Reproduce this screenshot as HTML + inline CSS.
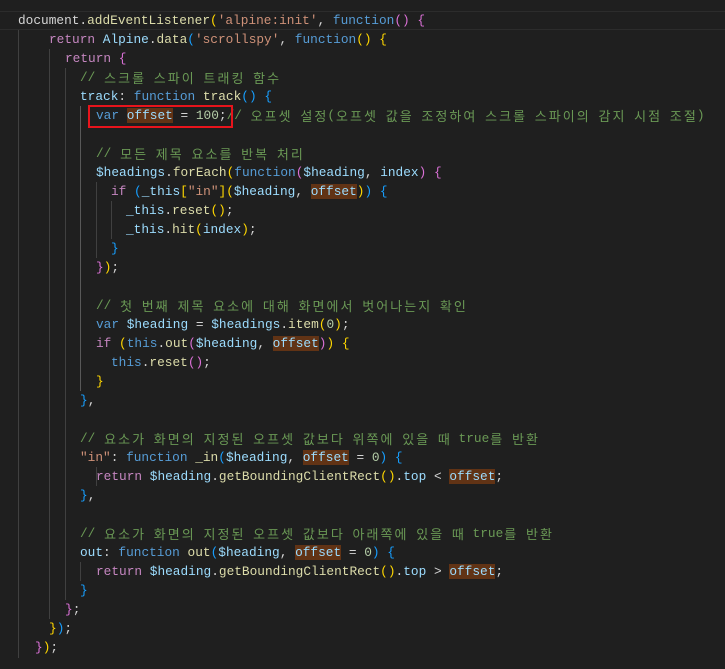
<!DOCTYPE html>
<html><head><meta charset="utf-8"><style>
html,body{margin:0;padding:0;background:#1f1f1f;width:725px;height:669px;overflow:hidden}
.l{position:absolute;white-space:pre;font-family:"Liberation Mono",monospace;font-size:12.8px;line-height:19px;color:#d4d4d4;height:19px}
i{font-style:normal;display:inline-block;width:14px;text-align:center;font-family:"Noto Sans CJK KR",sans-serif;font-size:13px;line-height:19px;vertical-align:top}
.c{color:#6a9955}.b{color:#569cd6}.p{color:#c586c0}.f{color:#dcdcaa}.v{color:#9cdcfe}.s{color:#ce9178}
.y{color:#ffd700}.o{color:#da70d6}.u{color:#179fff}.n{color:#b5cea8}
.h{background:#613315}
.g{position:absolute;width:1px;background:#404040}
</style></head><body>
<div style="position:absolute;left:0;top:11px;width:725px;height:17px;border-top:1px solid #2c2c2c;border-bottom:1px solid #2c2c2c"></div>
<div class="g" style="left:18px;top:30px;height:628px"></div>
<div class="g" style="left:49px;top:49px;height:570px"></div>
<div class="g" style="left:65px;top:68px;height:532px"></div>
<div class="g" style="left:80px;top:106px;height:285px;background:#585858"></div>
<div class="g" style="left:96px;top:182px;height:76px"></div>
<div class="g" style="left:111px;top:201px;height:38px"></div>
<div class="g" style="left:96px;top:467px;height:19px"></div>
<div class="g" style="left:80px;top:562px;height:19px"></div>

<div class="l" style="left:18px;top:11px">document.<span class="f">addEventListener</span><span class="y">(</span><span class="s">'alpine:init'</span>, <span class="b">function</span><span class="o">()</span> <span class="o">{</span></div>
<div class="l" style="left:49px;top:30px"><span class="p">return</span> <span class="v">Alpine</span>.<span class="f">data</span><span class="u">(</span><span class="s">'scrollspy'</span>, <span class="b">function</span><span class="y">()</span> <span class="y">{</span></div>
<div class="l" style="left:65px;top:49px"><span class="p">return</span> <span class="o">{</span></div>
<div class="l c" style="left:80px;top:68px">// <i>스</i><i>크</i><i>롤</i> <i>스</i><i>파</i><i>이</i> <i>트</i><i>래</i><i>킹</i> <i>함</i><i>수</i></div>
<div class="l" style="left:80px;top:87px"><span class="v">track</span>: <span class="b">function</span> <span class="f">track</span><span class="u">()</span> <span class="u">{</span></div>
<div class="l" style="left:96px;top:106px"><span class="b">var</span> <span class="v h">offset</span> = <span class="n">100</span>;<span class="c">// <i>오</i><i>프</i><i>셋</i> <i>설</i><i>정</i>(<i>오</i><i>프</i><i>셋</i> <i>값</i><i>을</i> <i>조</i><i>정</i><i>하</i><i>여</i> <i>스</i><i>크</i><i>롤</i> <i>스</i><i>파</i><i>이</i><i>의</i> <i>감</i><i>지</i> <i>시</i><i>점</i> <i>조</i><i>절</i>)</span></div>
<div style="position:absolute;left:88px;top:105px;width:141px;height:19px;border:2px solid #e8141c"></div>
<div class="l c" style="left:96px;top:144px">// <i>모</i><i>든</i> <i>제</i><i>목</i> <i>요</i><i>소</i><i>를</i> <i>반</i><i>복</i> <i>처</i><i>리</i></div>
<div class="l" style="left:96px;top:163px"><span class="v">$headings</span>.<span class="f">forEach</span><span class="y">(</span><span class="b">function</span><span class="o">(</span><span class="v">$heading</span>, <span class="v">index</span><span class="o">)</span> <span class="o">{</span></div>
<div class="l" style="left:111px;top:182px"><span class="p">if</span> <span class="u">(</span><span class="v">_this</span><span class="y">[</span><span class="s">"in"</span><span class="y">](</span><span class="v">$heading</span>, <span class="v h">offset</span><span class="y">)</span><span class="u">)</span> <span class="u">{</span></div>
<div class="l" style="left:126px;top:201px"><span class="v">_this</span>.<span class="f">reset</span><span class="y">()</span>;</div>
<div class="l" style="left:126px;top:220px"><span class="v">_this</span>.<span class="f">hit</span><span class="y">(</span><span class="v">index</span><span class="y">)</span>;</div>
<div class="l" style="left:111px;top:239px"><span class="u">}</span></div>
<div class="l" style="left:96px;top:258px"><span class="o">}</span><span class="y">)</span>;</div>
<div class="l c" style="left:96px;top:296px">// <i>첫</i> <i>번</i><i>째</i> <i>제</i><i>목</i> <i>요</i><i>소</i><i>에</i> <i>대</i><i>해</i> <i>화</i><i>면</i><i>에</i><i>서</i> <i>벗</i><i>어</i><i>나</i><i>는</i><i>지</i> <i>확</i><i>인</i></div>
<div class="l" style="left:96px;top:315px"><span class="b">var</span> <span class="v">$heading</span> = <span class="v">$headings</span>.<span class="f">item</span><span class="y">(</span><span class="n">0</span><span class="y">)</span>;</div>
<div class="l" style="left:96px;top:334px"><span class="p">if</span> <span class="y">(</span><span class="b">this</span>.<span class="f">out</span><span class="o">(</span><span class="v">$heading</span>, <span class="v h">offset</span><span class="o">)</span><span class="y">)</span> <span class="y">{</span></div>
<div class="l" style="left:111px;top:353px"><span class="b">this</span>.<span class="f">reset</span><span class="o">()</span>;</div>
<div class="l" style="left:96px;top:372px"><span class="y">}</span></div>
<div class="l" style="left:80px;top:391px"><span class="u">}</span>,</div>
<div class="l c" style="left:80px;top:429px">// <i>요</i><i>소</i><i>가</i> <i>화</i><i>면</i><i>의</i> <i>지</i><i>정</i><i>된</i> <i>오</i><i>프</i><i>셋</i> <i>값</i><i>보</i><i>다</i> <i>위</i><i>쪽</i><i>에</i> <i>있</i><i>을</i> <i>때</i> true<i>를</i> <i>반</i><i>환</i></div>
<div class="l" style="left:80px;top:448px"><span class="s">"in"</span>: <span class="b">function</span> <span class="f">_in</span><span class="u">(</span><span class="v">$heading</span>, <span class="v h">offset</span> = <span class="n">0</span><span class="u">)</span> <span class="u">{</span></div>
<div class="l" style="left:96px;top:467px"><span class="p">return</span> <span class="v">$heading</span>.<span class="f">getBoundingClientRect</span><span class="y">()</span>.<span class="v">top</span> &lt; <span class="v h">offset</span>;</div>
<div class="l" style="left:80px;top:486px"><span class="u">}</span>,</div>
<div class="l c" style="left:80px;top:524px">// <i>요</i><i>소</i><i>가</i> <i>화</i><i>면</i><i>의</i> <i>지</i><i>정</i><i>된</i> <i>오</i><i>프</i><i>셋</i> <i>값</i><i>보</i><i>다</i> <i>아</i><i>래</i><i>쪽</i><i>에</i> <i>있</i><i>을</i> <i>때</i> true<i>를</i> <i>반</i><i>환</i></div>
<div class="l" style="left:80px;top:543px"><span class="v">out</span>: <span class="b">function</span> <span class="f">out</span><span class="u">(</span><span class="v">$heading</span>, <span class="v h">offset</span> = <span class="n">0</span><span class="u">)</span> <span class="u">{</span></div>
<div class="l" style="left:96px;top:562px"><span class="p">return</span> <span class="v">$heading</span>.<span class="f">getBoundingClientRect</span><span class="y">()</span>.<span class="v">top</span> &gt; <span class="v h">offset</span>;</div>
<div class="l" style="left:80px;top:581px"><span class="u">}</span></div>
<div class="l" style="left:65px;top:600px"><span class="o">}</span>;</div>
<div class="l" style="left:49px;top:619px"><span class="y">}</span><span class="u">)</span>;</div>
<div class="l" style="left:35px;top:638px"><span class="o">}</span><span class="y">)</span>;</div>
</body></html>
